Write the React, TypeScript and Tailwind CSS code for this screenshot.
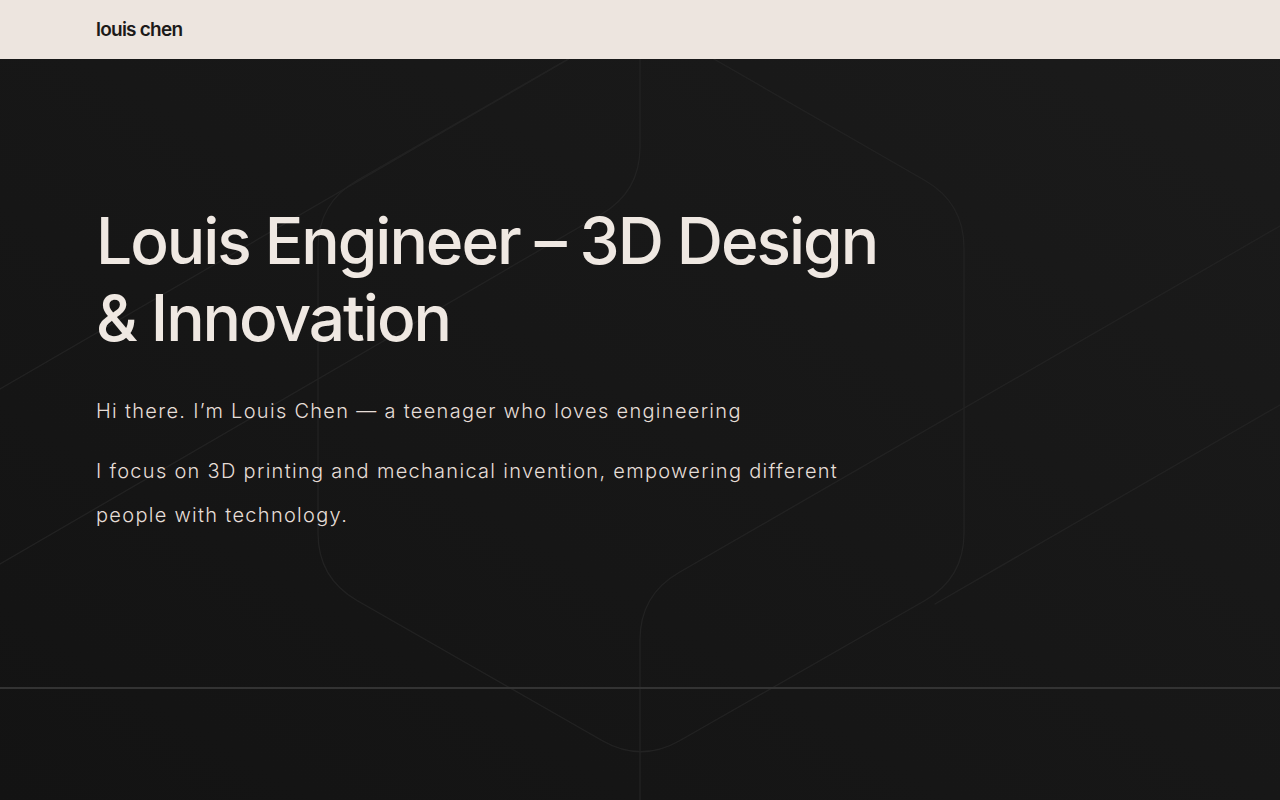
import React from "react";

function Backdrop() {
  return (
    <svg
      className="pointer-events-none absolute left-0 top-0 h-[800px] w-[1280px]"
      viewBox="0 0 1280 800"
      fill="none"
    >
      <g stroke="#222222" strokeWidth="1.3" fill="none" strokeLinecap="round">
        <path d="M680 39.5 L925 180.5 Q964 203 964 248 L964 533 Q964 578 925 600.5 L680 740.5 Q641 763 602 740.5 L357 600.5 Q318 578 318 533 L318 248 Q318 203 357 180.5 L602 39.5 Q641 17 680 39.5 Z" />
        <path d="M0 389 L641 17" />
        <path d="M1280 405 L935 604" />
        <path d="M640 0 L640 147 Q640 192 601 214.5 L0 564" />
        <path d="M640 800 L640 640 Q640 595 679 572.5 L1280 226" />
      </g>
    </svg>
  );
}

export default function App() {
  return (
    <div className="relative min-h-[800px] w-full overflow-hidden bg-linear-to-bl from-[#1b1b1b] via-[#171717] to-[#131313] font-['Inter','Noto_Sans',sans-serif]">
      <Backdrop />
      <header className="relative z-10 flex h-[59px] items-center bg-[#ede5df] px-24">
        <span className="text-[19px] font-semibold leading-7 tracking-[-0.04em] text-[#1c1a19]">
          louis chen
        </span>
      </header>
      <main className="relative z-10">
        <section className="h-[630px] border-b-2 border-[#333333] px-24 pt-[144px]">
          <h1 className="max-w-[820px] text-[64px] font-medium leading-[1.2] tracking-[-0.032em] text-[#efe8e2]">
            Louis Engineer – 3D Design &amp; Innovation
          </h1>
          <p className="mt-8 max-w-[780px] text-[20px] font-light leading-[44px] tracking-[0.065em] text-[#e6ded8]">
            Hi there. I’m Louis Chen — a teenager who loves engineering
          </p>
          <p className="mt-4 max-w-[780px] text-[20px] font-light leading-[44px] tracking-[0.065em] text-[#e6ded8]">
            I focus on 3D printing and mechanical invention, empowering different people with technology.
          </p>
        </section>
      </main>
    </div>
  );
}
